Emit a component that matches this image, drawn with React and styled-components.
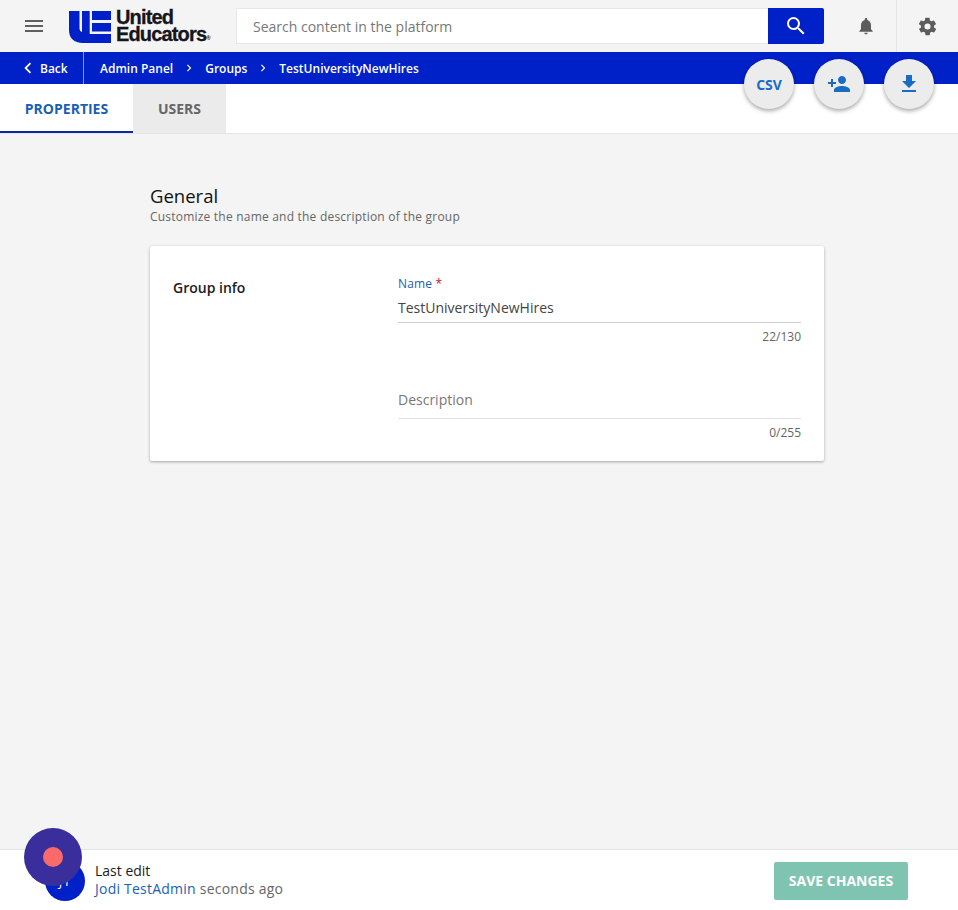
import React from "react";
import styled, { createGlobalStyle } from "styled-components";

const GlobalStyle = createGlobalStyle`
  html, body {
    margin: 0;
    padding: 0;
    background: #f4f4f4;
    font-family: "Open Sans", "Liberation Sans", sans-serif;
  }
  * { box-sizing: border-box; }
`;

const BLUE = "#0020c8";
const LINK = "#1a5fb4";

const Page = styled.div`
  position: relative;
  width: 958px;
  height: 910px;
  display: flex;
  flex-direction: column;
  overflow: hidden;
`;

const Header = styled.header`
  height: 52px;
  display: flex;
  align-items: stretch;
  background: #f4f4f4;
`;

const Burger = styled.div`
  width: 69px;
  padding-left: 24px;
  display: flex;
  align-items: center;
  color: #5f5f5f;
`;

const Logo = styled.div`
  width: 167px;
  display: flex;
  align-items: center;
  gap: 5px;
  svg { margin-top: 2px; }
`;

const LogoWords = styled.div`
  font-family: "Liberation Sans", Arial, sans-serif;
  font-weight: 700;
  font-size: 20px;
  line-height: 17px;
  letter-spacing: -0.85px;
  color: #15151c;
  -webkit-text-stroke: 0.3px #15151c;
  sup {
    font-size: 6px;
    line-height: 0;
    letter-spacing: 0;
    -webkit-text-stroke: 0;
    vertical-align: 1px;
  }
`;

const Search = styled.div`
  width: 588px;
  height: 36px;
  margin-top: 8px;
  display: flex;
`;

const SearchField = styled.div`
  flex: 1;
  background: #fff;
  border: 1px solid #e8e8e8;
  border-right: 0;
  padding-left: 16px;
  display: flex;
  align-items: center;
  font-size: 14px;
  color: #777;
`;

const SearchButton = styled.div`
  width: 56px;
  background: ${BLUE};
  border-radius: 0 2px 2px 0;
  display: flex;
  align-items: center;
  justify-content: center;
  color: #fff;
`;

const HeaderIcon = styled.div`
  display: flex;
  align-items: center;
  justify-content: center;
  color: #5c5c5c;
  width: ${(p) => p.$width}px;
  margin-left: ${(p) => p.$offset || 0}px;
  padding-right: ${(p) => (p.$divided ? "1px" : "0")};
  border-left: ${(p) => (p.$divided ? "1px solid #e4e4e4" : "0")};
`;

const Crumbs = styled.nav`
  height: 32px;
  background: ${BLUE};
  display: flex;
  align-items: center;
  color: #fff;
  font-size: 12px;
  font-weight: 600;
`;

const BackLink = styled.div`
  width: 84px;
  height: 100%;
  padding-left: 17px;
  display: flex;
  align-items: center;
  gap: 1px;
  border-right: 1px solid #8a97e0;
`;

const Trail = styled.div`
  padding-left: 16px;
  display: flex;
  align-items: center;
  gap: 9px;
`;

const Tabs = styled.div`
  height: 50px;
  background: #fff;
  display: flex;
  border-bottom: 1px solid #e6e6e6;
`;

const Tab = styled.div`
  width: ${(p) => p.$width}px;
  height: 49px;
  padding-top: 2px;
  display: flex;
  align-items: center;
  justify-content: center;
  font-size: 14px;
  font-weight: 700;
  color: ${(p) => (p.$active ? LINK : "#666")};
  background: ${(p) => (p.$active ? "#fff" : "#ebebeb")};
  border-bottom: 2px solid ${(p) => (p.$active ? "#0a2a9e" : "transparent")};
`;

const Fabs = styled.div`
  position: absolute;
  top: 59px;
  right: 24px;
  display: flex;
  gap: 20px;
`;

const Fab = styled.div`
  width: 50px;
  height: 50px;
  border-radius: 50%;
  background: #ececec;
  box-shadow: 0 2px 4px rgba(0, 0, 0, 0.35);
  display: flex;
  align-items: center;
  justify-content: center;
  color: #1a6bc4;
  font-size: 14px;
  font-weight: 700;
`;

const Main = styled.main`
  flex: 1;
  padding: 49px 0 0 150px;
`;

const Title = styled.h2`
  margin: 0 0 1px;
  font-size: 18.500px;
  font-weight: 500;
  line-height: 25px;
  color: #111;
`;

const Subtitle = styled.p`
  margin: 0 0 21px;
  font-size: 12px;
  line-height: 16px;
  letter-spacing: 0.21px;
  color: #666;
`;

const Card = styled.section`
  width: 674px;
  height: 215px;
  background: #fff;
  border-radius: 2px;
  box-shadow: 0 1px 3px rgba(0, 0, 0, 0.32);
  padding: 30px 23px 0;
  display: flex;
`;

const CardLabel = styled.div`
  width: 225px;
  font-size: 14px;
  font-weight: 560;
  line-height: 24px;
  color: #1c1c1c;
`;

const Fields = styled.div`
  flex: 1;
  display: flex;
  flex-direction: column;
`;

const Field = styled.div`
  height: ${(p) => p.$height}px;
`;

const FieldLabel = styled.div`
  font-size: 12px;
  font-weight: 400;
  line-height: 16px;
  letter-spacing: 0.15px;
  color: ${LINK};
  span { color: #c8102e; }
`;

const FieldValue = styled.div`
  height: ${(p) => p.$height || 30}px;
  margin-top: ${(p) => p.$offset || 0}px;
  padding-bottom: ${(p) => (p.$empty ? "2px" : "0")};
  display: flex;
  align-items: center;
  font-size: 14px;
  color: ${(p) => (p.$empty ? "#777" : "#444")};
  border-bottom: 1px solid ${(p) => (p.$empty ? "#e2e2e2" : "#cfcfcf")};
`;

const Counter = styled.div`
  margin-top: 6px;
  text-align: right;
  font-size: 12px;
  line-height: 16px;
  color: #666;
`;

const Footer = styled.footer`
  height: 61px;
  background: #fff;
  border-top: 1px solid #e2e2e2;
  display: flex;
  align-items: center;
  padding: 0 50px 0 45px;
`;

const Avatar = styled.div`
  width: 40px;
  height: 40px;
  margin-top: 2px;
  border-radius: 50%;
  background: ${BLUE};
  color: #fff;
  font-size: 13px;
  letter-spacing: 1px;
  display: flex;
  align-items: center;
  justify-content: center;
`;

const EditInfo = styled.div`
  flex: 1;
  margin-left: 10px;
  font-size: 14px;
  line-height: 18px;
  color: #1c1c1c;
`;

const Editor = styled.div`
  color: #666;
  font-weight: 500;
  letter-spacing: 0.23px;
  span { color: ${LINK}; }
`;

const SaveButton = styled.div`
  width: 134px;
  height: 38px;
  margin-top: 1px;
  background: #7fc4b1;
  border-radius: 2px;
  color: #fff;
  font-size: 14px;
  font-weight: 700;
  display: flex;
  align-items: center;
  justify-content: center;
`;

const Launcher = styled.div`
  position: absolute;
  left: 24px;
  top: 828px;
  width: 58px;
  height: 58px;
  border-radius: 50%;
  background: #3a2e9c;
  display: flex;
  align-items: center;
  justify-content: center;
`;

const LauncherDot = styled.div`
  width: 20px;
  height: 20px;
  border-radius: 50%;
  background: #fb6a6a;
`;

const Chevron = ({ size = 14, left }) => (
  <svg width={size} height={size} viewBox="0 0 24 24" fill="currentColor">
    <path d={left ? "M15.4 7.4 14 6l-6 6 6 6 1.4-1.4L10.8 12z" : "M8.6 16.6 10 18l6-6-6-6-1.4 1.4L13.2 12z"} />
  </svg>
);

export default function App() {
  return (
    <Page>
      <GlobalStyle />
      <Header>
        <Burger>
          <svg width="20" height="20" viewBox="0 0 20 20" fill="currentColor">
            <path d="M1 4h18v2H1zM1 9h18v2H1zM1 14h18v2H1z" />
          </svg>
        </Burger>
        <Logo>
          <svg width="42" height="32" viewBox="0 0 42 32" fill={BLUE}>
            <path d="M0 0H10.500V17c0 2 .8 3.400 2.500 4V0H20.700V23H42V32H14C5 32 0 27 0 19Z" />
            <path d="M23 0H42V9H23ZM23 12H42V20.500H23Z" />
          </svg>
          <LogoWords>
            United
            <br />
            Educators<sup>®</sup>
          </LogoWords>
        </Logo>
        <Search>
          <SearchField>Search content in the platform</SearchField>
          <SearchButton>
            <svg width="24" height="24" viewBox="0 0 24 24" fill="currentColor">
              <path d="M15.5 14h-.79l-.28-.27A6.471 6.471 0 0 0 16 9.5 6.5 6.5 0 1 0 9.5 16c1.610 0 3.090-.59 4.230-1.570l.27.28v.79l5 4.990L20.490 19l-4.990-5zm-6 0C7.010 14 5 11.990 5 9.500S7.010 5 9.500 5 14 7.010 14 9.500 11.990 14 9.500 14z" />
            </svg>
          </SearchButton>
        </Search>
        <HeaderIcon $width={20} $offset={32}>
          <svg width="20" height="20" viewBox="0 0 24 24" fill="currentColor">
            <path d="M12 22c1.100 0 2-.9 2-2h-4c0 1.100.9 2 2 2zm6-6v-5c0-3.100-1.600-5.600-4.500-6.300V4a1.500 1.500 0 0 0-3 0v.7C7.600 5.400 6 7.900 6 11v5l-2 2v1h16v-1z" />
          </svg>
        </HeaderIcon>
        <HeaderIcon $width={62} $offset={20} $divided>
          <svg width="21" height="21" viewBox="0 0 24 24" fill="currentColor">
            <path d="M19.400 13c0-.3.1-.6.1-1s0-.7-.1-1l2.100-1.600c.2-.2.2-.4.100-.6l-2-3.500c-.1-.2-.4-.3-.6-.2l-2.500 1c-.5-.4-1.100-.7-1.700-1l-.4-2.600c0-.3-.2-.5-.5-.5h-4c-.3 0-.5.2-.5.400l-.4 2.700c-.6.200-1.200.6-1.700 1l-2.500-1c-.2-.1-.5 0-.6.200l-2 3.500c-.1.200-.1.500.1.600L4.600 11c0 .3-.1.700-.1 1s0 .7.1 1l-2.100 1.600c-.2.200-.2.400-.1.600l2 3.500c.1.200.4.300.6.200l2.500-1c.5.400 1.100.7 1.700 1l.4 2.600c0 .3.200.5.500.5h4c.3 0 .5-.2.500-.4l.4-2.700c.6-.2 1.200-.6 1.700-1l2.500 1c.2.100.5 0 .6-.2l2-3.500c.1-.2.100-.5-.1-.6zM12 15.500a3.500 3.500 0 1 1 0-7 3.500 3.500 0 0 1 0 7z" />
          </svg>
        </HeaderIcon>
      </Header>

      <Crumbs>
        <BackLink>
          <Chevron left size={22} />
          Back
        </BackLink>
        <Trail>
          Admin Panel
          <Chevron />
          Groups
          <Chevron />
          TestUniversityNewHires
        </Trail>
      </Crumbs>

      <Tabs>
        <Tab $width={133} $active>PROPERTIES</Tab>
        <Tab $width={93}>USERS</Tab>
      </Tabs>

      <Fabs>
        <Fab>CSV</Fab>
        <Fab>
          <svg width="24" height="24" viewBox="0 0 24 24" fill="currentColor">
            <path d="M15 12c2.200 0 4-1.800 4-4s-1.800-4-4-4-4 1.800-4 4 1.800 4 4 4zm-9-2V7H4v3H1v2h3v3h2v-3h3v-2zm9 4c-2.700 0-8 1.300-8 4v2h16v-2c0-2.700-5.300-4-8-4z" />
          </svg>
        </Fab>
        <Fab>
          <svg width="24" height="24" viewBox="0 0 24 24" fill="currentColor">
            <path d="M19 9h-4V3H9v6H5l7 7zM5 18v2h14v-2z" />
          </svg>
        </Fab>
      </Fabs>

      <Main>
        <Title>General</Title>
        <Subtitle>Customize the name and the description of the group</Subtitle>
        <Card>
          <CardLabel>Group info</CardLabel>
          <Fields>
            <Field $height={108}>
              <FieldLabel>
                Name <span>*</span>
              </FieldLabel>
              <FieldValue $offset={1}>TestUniversityNewHires</FieldValue>
              <Counter>22/130</Counter>
            </Field>
            <Field $height={70}>
              <FieldValue $empty $offset={-2} $height={37}>Description</FieldValue>
              <Counter>0/255</Counter>
            </Field>
          </Fields>
        </Card>
      </Main>

      <Footer>
        <Avatar>JT</Avatar>
        <EditInfo>
          Last edit
          <Editor>
            <span>Jodi TestAdmin</span> seconds ago
          </Editor>
        </EditInfo>
        <SaveButton>SAVE CHANGES</SaveButton>
      </Footer>

      <Launcher>
        <LauncherDot />
      </Launcher>
    </Page>
  );
}
